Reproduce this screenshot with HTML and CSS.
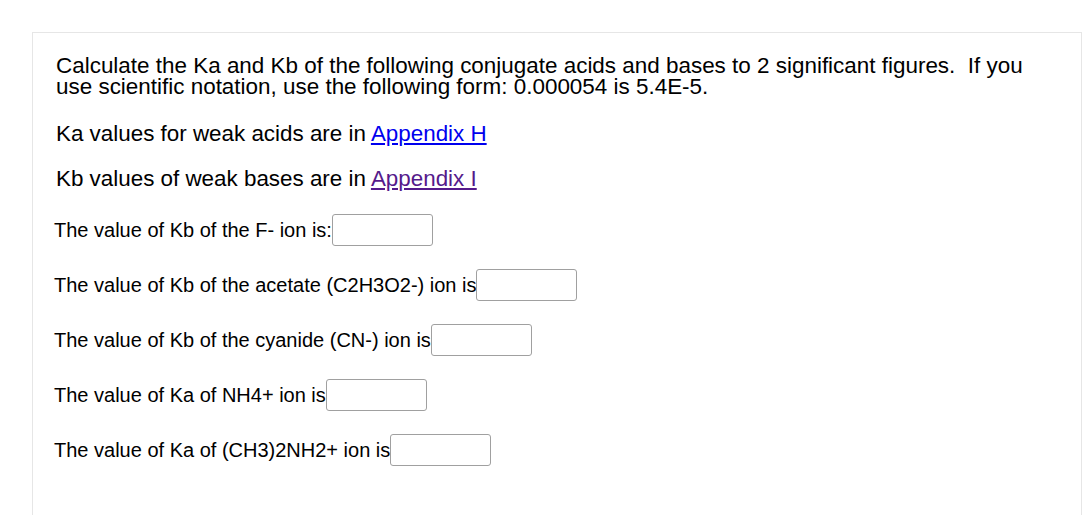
FILE: index.html
```html
<!DOCTYPE html>
<html>
<head>
<meta charset="utf-8">
<link rel="stylesheet" href="styles.css">
</head>
<body>
<div class="panel">
  <p class="intro">Calculate the Ka and Kb of the following conjugate acids and bases to 2 significant figures.&nbsp; If you use scientific notation, use the following form: 0.000054 is 5.4E-5.</p>
  <p class="ref">Ka values for weak acids are in <a href="#" class="link">Appendix H</a></p>
  <p class="ref">Kb values of weak bases are in <a href="#" class="link visited">Appendix I</a></p>
  <div class="questions">
    <div class="q">The value of Kb of the F- ion is:<input class="answer" type="text"></div>
    <div class="q">The value of Kb of the acetate (C2H3O2-) ion is<input class="answer" type="text"></div>
    <div class="q">The value of Kb of the cyanide (CN-) ion is<input class="answer" type="text"></div>
    <div class="q">The value of Ka of NH4+ ion is<input class="answer" type="text"></div>
    <div class="q">The value of Ka of (CH3)2NH2+ ion is<input class="answer" type="text"></div>
  </div>
</div>
</body>
</html>
```
FILE: styles.css
```css
html, body {
  margin: 0;
  padding: 0;
  background: #fff;
}
body {
  font-family: "Liberation Sans", Arial, sans-serif;
  color: #000;
  padding: 32px 4px 0 32px;
  height: 515px;
  overflow: hidden;
  box-sizing: border-box;
}
.panel {
  border: 1px solid #e6e6e6;
  border-bottom: none;
  height: 600px;
  padding: 22px 20px 0 23px;
}
.intro {
  margin: 0;
  font-size: 22.45px;
  line-height: 21px;
}
.ref {
  margin: 24.5px 0 0 0;
  font-size: 22.4px;
  line-height: 23px;
}
.ref + .ref {
  margin-top: 22px;
}
.link {
  color: #0000ee;
  text-decoration: underline;
}
.link.visited {
  color: #551a8b;
}
.questions {
  margin-top: 24.5px;
  margin-left: -2px;
  display: flex;
  flex-direction: column;
  gap: 23px;
}
.q {
  font-size: 20px;
  display: flex;
  align-items: center;
  height: 32px;
}
.answer {
  width: 101px;
  height: 32px;
  box-sizing: border-box;
  border: 1px solid #a0a0a0;
  border-radius: 3px;
  margin: 0;
  padding: 0 4px;
  font-size: 16px;
  background: #fff;
}
```
